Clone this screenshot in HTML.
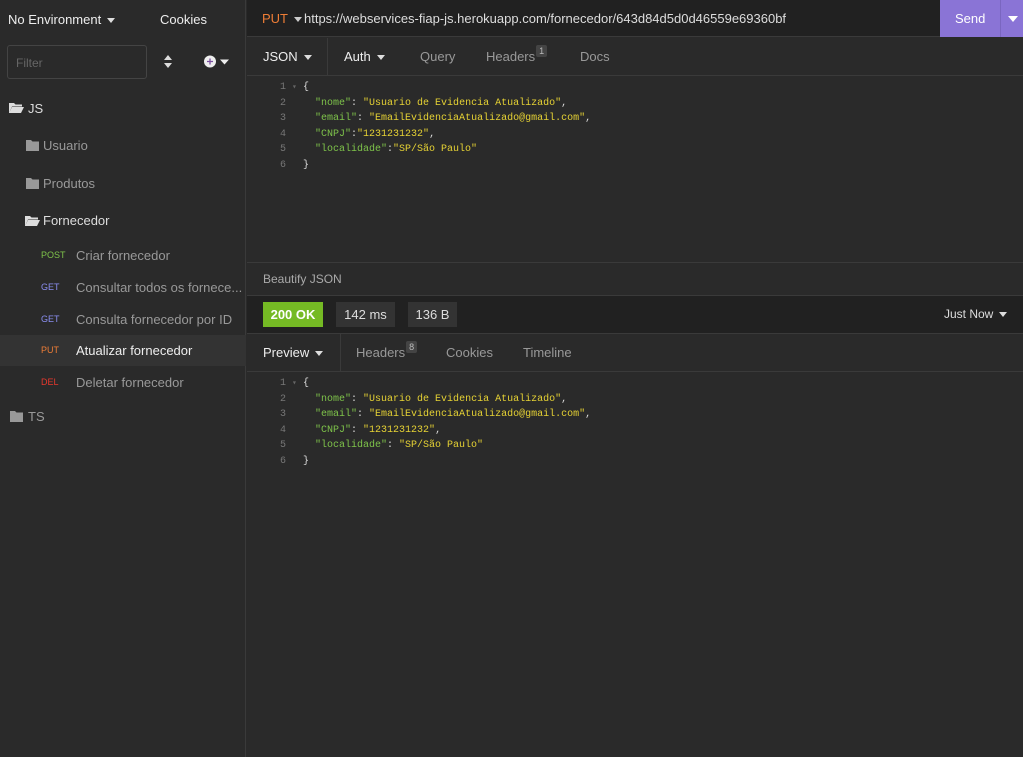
<!DOCTYPE html>
<html><head><meta charset="utf-8"><style>
*{margin:0;padding:0;box-sizing:border-box}
body{width:1023px;height:757px;background:#2a2a2a;font-family:"Liberation Sans",sans-serif;font-size:13px;color:#ddd;position:relative;overflow:hidden}
.abs{position:absolute}
.side{left:0;top:0;width:246px;height:757px;background:#2a2a2a;border-right:1px solid #3a3a3a}
.tri{display:inline-block;width:0;height:0;border-left:4.5px solid transparent;border-right:4.5px solid transparent;border-top:5px solid #ddd;vertical-align:middle;margin-left:6px}
.item{position:absolute;left:0;width:246px;height:31px;line-height:31px;color:#999}
.m{position:absolute;left:41px;font-size:9px;font-weight:normal}
.n{position:absolute;left:76px}
.code{font-family:"Liberation Mono",monospace;font-size:10px;line-height:15.6px;white-space:pre}
.ln{color:#777;position:absolute;width:20px;text-align:right}
.k{color:#7ec34a}.s{color:#e6d234}.p{color:#ddd}
.tab{position:absolute;top:0;height:38px;line-height:38px;color:#999}
.badge{display:inline-block;background:#444;color:#bbb;font-size:9px;line-height:12px;padding:0 3px;border-radius:2px;vertical-align:top;margin-top:7px;margin-left:1px}
</style></head><body>
<div class="abs side">
 <div class="abs" style="left:8px;top:12px;color:#eee">No Environment<span class="tri"></span></div>
 <div class="abs" style="left:160px;top:12px;color:#eee">Cookies</div>
 <div class="abs" style="left:7px;top:45px;width:140px;height:34px;border:1px solid #444;border-radius:3px;padding:10px 8px;color:#666;font-size:12px">Filter</div>
 <svg class="abs" style="left:163px;top:55px" width="10" height="13"><path d="M5 0L9 5H1z M5 13L9 8H1z" fill="#ddd"/></svg>
 <svg class="abs" style="left:204px;top:55px" width="28" height="13"><circle cx="6" cy="6.5" r="6" fill="#eee"/><path d="M6 3.5v6M3 6.5h6" stroke="#7a4ea0" stroke-width="1.3"/><path d="M16 4.5h9l-4.5 5z" fill="#eee"/></svg>
 <svg class="abs" style="left:9px;top:102px" width="15" height="12"><path d="M0 1h5l1.5 1.5H13v2H3L0 11z M3 5h12l-3 6H0z" fill="#ddd"/></svg>
 <div class="abs" style="left:28px;top:101px;color:#ddd">JS</div>
 <svg class="abs" style="left:26px;top:140px" width="13" height="11"><path d="M0 0h5l1.5 1.5H13V11H0z" fill="#999"/></svg>
 <div class="abs" style="left:43px;top:138px;color:#999">Usuario</div>
 <svg class="abs" style="left:26px;top:178px" width="13" height="11"><path d="M0 0h5l1.5 1.5H13V11H0z" fill="#999"/></svg>
 <div class="abs" style="left:43px;top:176px;color:#999">Produtos</div>
 <svg class="abs" style="left:25px;top:215px" width="15" height="12"><path d="M0 1h5l1.5 1.5H13v2H3L0 11z M3 5h12l-3 6H0z" fill="#ddd"/></svg>
 <div class="abs" style="left:43px;top:213px;color:#ddd">Fornecedor</div>
 <div class="item" style="top:240px"><span class="m" style="color:#7ec34a">POST</span><span class="n">Criar fornecedor</span></div>
 <div class="item" style="top:272px"><span class="m" style="color:#8a8ef0">GET</span><span class="n">Consultar todos os fornece...</span></div>
 <div class="item" style="top:304px"><span class="m" style="color:#8a8ef0">GET</span><span class="n">Consulta fornecedor por ID</span></div>
 <div class="item" style="top:335px;background:#333;color:#eee"><span class="m" style="color:#ee7d36">PUT</span><span class="n">Atualizar fornecedor</span></div>
 <div class="item" style="top:367px"><span class="m" style="color:#e5382e">DEL</span><span class="n">Deletar fornecedor</span></div>
 <svg class="abs" style="left:10px;top:411px" width="13" height="11"><path d="M0 0h5l1.5 1.5H13V11H0z" fill="#999"/></svg>
 <div class="abs" style="left:28px;top:409px;color:#999">TS</div>
</div>
<div class="abs" style="left:247px;top:0;width:776px;height:37px;background:#212121;border-bottom:1px solid #3a3a3a"></div>
<div class="abs" style="left:262px;top:11px;color:#ee7d36">PUT<span class="tri" style="border-top-color:#ccc"></span></div>
<div class="abs" style="left:304px;top:11px;color:#ddd">https://webservices-fiap-js.herokuapp.com/fornecedor/643d84d5d0d46559e69360bf</div>
<div class="abs" style="left:940px;top:0;width:83px;height:37px;background:#8a74d6"></div>
<div class="abs" style="left:955px;top:11px;color:#fff">Send</div>
<div class="abs" style="left:1000px;top:0;width:1px;height:37px;background:#7a66c0"></div>
<svg class="abs" style="left:1008px;top:16px" width="10" height="6"><path d="M0 0h10L5 6z" fill="#fff"/></svg>
<div class="abs" style="left:247px;top:38px;width:776px;height:38px;border-bottom:1px solid #3a3a3a">
 <div class="tab" style="left:16px;color:#eee">JSON<span class="tri"></span></div>
 <div class="abs" style="left:80px;top:0;width:1px;height:38px;background:#3a3a3a"></div>
 <div class="tab" style="left:97px;color:#eee">Auth<span class="tri"></span></div>
 <div class="tab" style="left:173px">Query</div>
 <div class="tab" style="left:239px">Headers<span class="badge">1</span></div>
 <div class="tab" style="left:333px">Docs</div>
</div>
<div class="abs code" style="left:266px;top:80px;width:700px;height:100px"><span class="ln" style="top:0">1</span><span class="abs" style="left:26px;top:0;color:#666;font-size:8px">▾</span><span class="ln" style="top:15.6px">2</span><span class="ln" style="top:31.2px">3</span><span class="ln" style="top:46.8px">4</span><span class="ln" style="top:62.4px">5</span><span class="ln" style="top:78px">6</span><div class="abs" style="left:37px;top:0">{
  <span class="k">"nome"</span>: <span class="s">"Usuario de Evidencia Atualizado"</span>,
  <span class="k">"email"</span>: <span class="s">"EmailEvidenciaAtualizado@gmail.com"</span>,
  <span class="k">"CNPJ"</span>:<span class="s">"1231231232"</span>,
  <span class="k">"localidade"</span>:<span class="s">"SP/São Paulo"</span>
}</div></div>
<div class="abs" style="left:247px;top:262px;width:776px;height:34px;border-top:1px solid #3a3a3a;border-bottom:1px solid #3a3a3a"></div>
<div class="abs" style="left:263px;top:272px;color:#aaa;font-size:12px">Beautify JSON</div>
<div class="abs" style="left:247px;top:296px;width:776px;height:38px;background:#212121;border-bottom:1px solid #3a3a3a"></div>
<div class="abs" style="left:263px;top:302px;width:60px;height:25px;background:#75ba24;color:#fff;font-weight:bold;line-height:25px;text-align:center">200 OK</div>
<div class="abs" style="left:336px;top:302px;width:59px;height:25px;background:#333;color:#ddd;line-height:25px;text-align:center">142 ms</div>
<div class="abs" style="left:408px;top:302px;width:49px;height:25px;background:#333;color:#ddd;line-height:25px;text-align:center">136 B</div>
<div class="abs" style="left:944px;top:307px;color:#ddd;font-size:12px">Just Now<span class="tri"></span></div>
<div class="abs" style="left:247px;top:334px;width:776px;height:38px;border-bottom:1px solid #3a3a3a">
 <div class="tab" style="left:16px;color:#eee">Preview<span class="tri"></span></div>
 <div class="abs" style="left:93px;top:0;width:1px;height:38px;background:#3a3a3a"></div>
 <div class="tab" style="left:109px">Headers<span class="badge">8</span></div>
 <div class="tab" style="left:199px">Cookies</div>
 <div class="tab" style="left:276px">Timeline</div>
</div>
<div class="abs code" style="left:266px;top:376px;width:700px;height:100px"><span class="ln" style="top:0">1</span><span class="abs" style="left:26px;top:0;color:#666;font-size:8px">▾</span><span class="ln" style="top:15.6px">2</span><span class="ln" style="top:31.2px">3</span><span class="ln" style="top:46.8px">4</span><span class="ln" style="top:62.4px">5</span><span class="ln" style="top:78px">6</span><div class="abs" style="left:37px;top:0">{
  <span class="k">"nome"</span>: <span class="s">"Usuario de Evidencia Atualizado"</span>,
  <span class="k">"email"</span>: <span class="s">"EmailEvidenciaAtualizado@gmail.com"</span>,
  <span class="k">"CNPJ"</span>: <span class="s">"1231231232"</span>,
  <span class="k">"localidade"</span>: <span class="s">"SP/São Paulo"</span>
}</div></div>
</body></html>
